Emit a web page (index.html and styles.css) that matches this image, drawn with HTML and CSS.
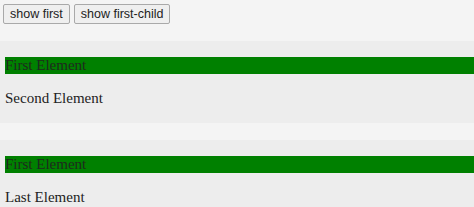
FILE: index.html
```html
<!DOCTYPE html>
<html lang="en">
<head>
    <meta charset="UTF-8">
    <title>first vs first-child</title>
    <link rel="stylesheet" href="styles.css">
</head>
<body>
    <div class="controls">
        <button class="btn">show first</button>
        <button class="btn">show first-child</button>
    </div>

    <div class="box">
        <p class="hl">First Element</p>
        <p>Second Element</p>
    </div>

    <div class="box">
        <p class="hl">First Element</p>
        <p>Last Element</p>
    </div>
</body>
</html>
```

FILE: styles.css
```css
body {
    margin: 0;
    background: #f4f4f4;
    font-family: "Liberation Serif", "Times New Roman", serif;
    font-size: 15px;
    color: #222;
}

.controls {
    display: flex;
    gap: 4px;
    padding: 4px 3px 0;
}

.btn {
    font-family: "Liberation Sans", Arial, sans-serif;
    font-size: 12.5px;
    height: 20px;
    padding: 0 6px;
    background: #efefef;
    color: #222;
    border: 1px solid #a9a9a9;
    border-radius: 2px;
}

.box {
    display: flow-root;
    background: #ededed;
    margin-top: 17px;
    padding: 0 0 0 5px;
}

.box p {
    margin: 16px 0 16px;
    line-height: 17px;
}

.hl {
    background: #008000;
    color: #1e2a1e;
}
```
